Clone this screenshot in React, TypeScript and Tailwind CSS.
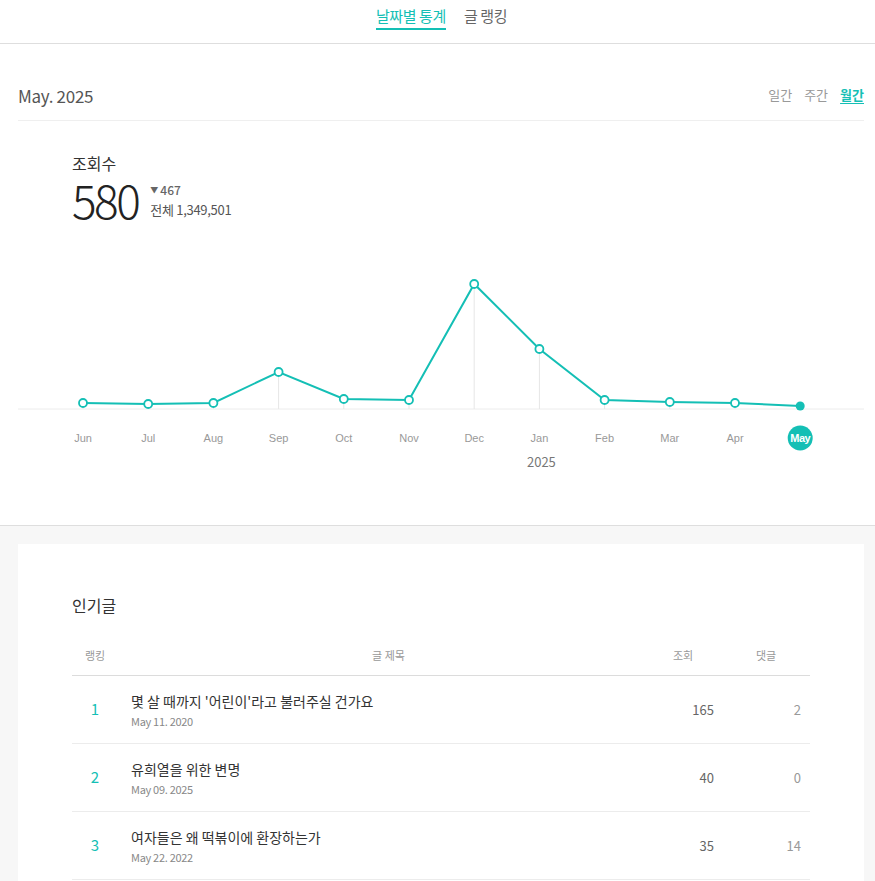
import React from "react";

const TEAL = "#14bfb5";

const MONTHS = ["Jun", "Jul", "Aug", "Sep", "Oct", "Nov", "Dec", "Jan", "Feb", "Mar", "Apr", "May"];
// y positions (page coords) of each point
const YS = [403, 404, 403, 372, 399, 400, 284, 349, 400, 402, 403, 406];

const POSTS = [
  { rank: 1, title: "몇 살 때까지 '어린이'라고 불러주실 건가요", date: "May 11. 2020", views: 165, comments: 2 },
  { rank: 2, title: "유희열을 위한 변명", date: "May 09. 2025", views: 40, comments: 0 },
  { rank: 3, title: "여자들은 왜 떡볶이에 환장하는가", date: "May 22. 2022", views: 35, comments: 14 },
];

const KR = { fontFamily: '"Noto Sans CJK KR", "Noto Sans", sans-serif' };

function Chart() {
  // svg spans page x 18..864, y 240..480
  const ox = 18;
  const oy = 240;
  const xs = MONTHS.map((_, i) => 83 + i * 65.2 - ox);
  const ys = YS.map((y) => y - oy);
  const base = 409 - oy;
  const pts = xs.map((x, i) => `${x},${ys[i]}`).join(" ");
  return (
    <svg width="846" height="240" viewBox="0 0 846 240" className="block">
      <line x1="0" y1={base} x2="846" y2={base} stroke="#ececec" strokeWidth="1" />
      {xs.map((x, i) =>
        i === 11 ? null : (
          <line key={i} x1={x} y1={ys[i]} x2={x} y2={base} stroke="#e6e6e6" strokeWidth="1" />
        )
      )}
      <polyline points={pts} fill="none" stroke={TEAL} strokeWidth="2" />
      {xs.map((x, i) =>
        i === 11 ? (
          <circle key={i} cx={x} cy={ys[i]} r="4.5" fill={TEAL} />
        ) : (
          <circle key={i} cx={x} cy={ys[i]} r="4" fill="#fff" stroke={TEAL} strokeWidth="1.8" />
        )
      )}
      {xs.map((x, i) =>
        i === 11 ? (
          <g key={i}>
            <circle cx={x} cy={198} r="12.5" fill={TEAL} />
            <text x={x} y={202} textAnchor="middle" fontSize="11" fontWeight="700" fill="#fff" fontFamily='"Liberation Sans", Arial, sans-serif' letterSpacing="-0.5">
              {MONTHS[i]}
            </text>
          </g>
        ) : (
          <text key={i} x={x} y={202} textAnchor="middle" fontSize="11" fill="#999" fontFamily='"Liberation Sans", Arial, sans-serif'>
            {MONTHS[i]}
          </text>
        )
      )}
      <text x={xs[7] + 2} y={227} textAnchor="middle" fontSize="13" fill="#777" fontFamily='"Noto Sans CJK KR", "Noto Sans", sans-serif'>
        2025
      </text>
    </svg>
  );
}

export default function App() {
  return (
    <div className="h-[881px] overflow-hidden bg-[#f7f7f7]" style={KR}>
      {/* top tabs */}
      <div className="bg-white h-[44px] border-b border-[#dedede] flex justify-center gap-[18px] pl-[8px]">
        <div className="relative pt-[5px] text-[15px] text-[#14bfb5] leading-[22px] tracking-[-0.4px]">
          날짜별 통계
          <div className="absolute left-0 right-0 top-[28px] h-[2px] bg-[#14bfb5]" />
        </div>
        <div className="pt-[5px] text-[15px] text-[#666] leading-[22px] tracking-[-0.4px]">글 랭킹</div>
      </div>

      {/* stats */}
      <div className="bg-white border-b border-[#dedede] pl-[18px] pr-[11px] pb-[45px]">
        <div className="h-[77px] border-b border-[#efefef] flex items-end justify-between pb-[12px]">
          <div className="text-[17px] text-[#555] leading-[24px] tracking-[-0.3px]">May. 2025</div>
          <div className="flex gap-[12px] text-[13px] text-[#999] leading-[20px] pb-[3px]">
            <span>일간</span>
            <span>주간</span>
            <span className="text-[#14bfb5] underline underline-offset-[3px] font-semibold">월간</span>
          </div>
        </div>
        <div className="pl-[54px] pt-[31px]">
          <div className="text-[16px] text-[#333] leading-[22px]">조회수</div>
          <div className="flex items-start gap-[12px] mt-[3px]">
            <div className="text-[46px] leading-[44px] text-[#222] font-light tracking-[-2.5px]">580</div>
            <div className="pt-[5px]">
              <div className="text-[12px] text-[#666] leading-[16px] font-medium flex items-center">
                <span className="text-[8px] mr-[2px]">▼</span>467
              </div>
              <div className="text-[13px] text-[#555] leading-[20px] mt-[2px] tracking-[-0.3px]">전체 1,349,501</div>
            </div>
          </div>
        </div>
        <div className="mt-[19px]">
          <Chart />
        </div>
      </div>

      {/* popular posts */}
      <div className="pl-[18px] pr-[11px] pt-[18px] pb-[40px]">
        <div className="bg-white px-[54px] pt-[50px] pb-[40px]">
          <div className="text-[16px] text-[#333] leading-[22px]">인기글</div>
          <div className="mt-[20px]">
            <div className="flex items-center h-[40px] border-b border-[#dcdcdc] text-[11px] text-[#999]">
              <div className="w-[46px] text-center">랭킹</div>
              <div className="flex-1 text-center">글 제목</div>
              <div className="w-[48px] text-center">조회</div>
              <div className="w-[35px]" />
              <div className="w-[48px] text-center">댓글</div>
              <div className="w-[20px]" />
            </div>
            {POSTS.map((p) => (
              <div key={p.rank} className="flex items-center h-[68px] border-b border-[#ececec]">
                <div className="w-[46px] text-center text-[15px] text-[#14bfb5]">{p.rank}</div>
                <div className="flex-1 pl-[13px]">
                  <div className="text-[14px] text-[#333] leading-[20px]">{p.title}</div>
                  <div className="text-[11px] text-[#888] leading-[16px] mt-[2px] tracking-[-0.3px]">{p.date}</div>
                </div>
                <div className="w-[90px] text-right text-[13px] text-[#666]">{p.views}</div>
                <div className="w-[96px] text-right text-[13px] text-[#999] pr-[9px]">{p.comments}</div>
              </div>
            ))}
          </div>
        </div>
      </div>
    </div>
  );
}
